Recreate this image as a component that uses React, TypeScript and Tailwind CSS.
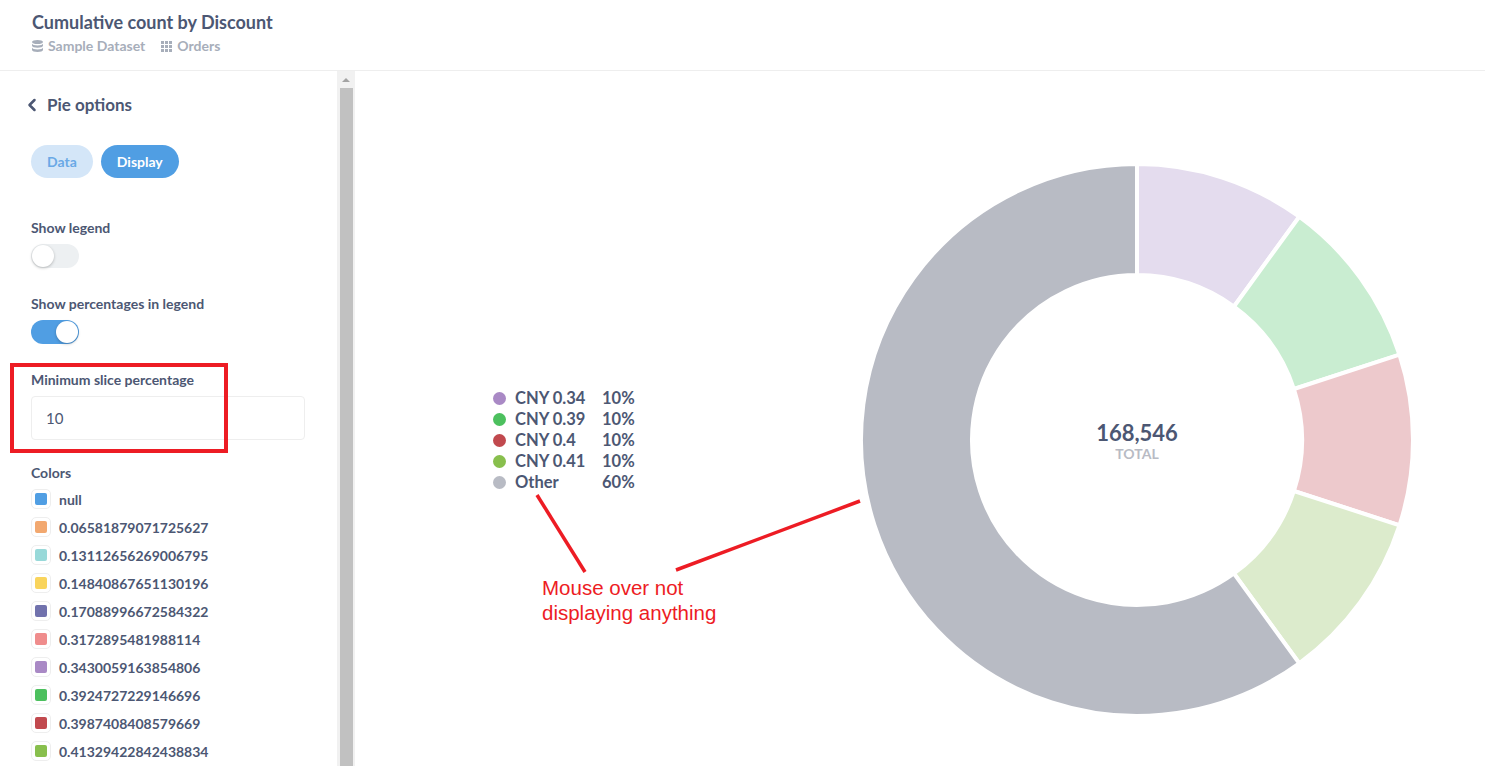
import { ChevronLeft } from "lucide-react"

const colorRows = [
  { label: "null", color: "#509ee3" },
  { label: "0.06581879071725627", color: "#f2a86f" },
  { label: "0.13112656269006795", color: "#98d9d9" },
  { label: "0.14840867651130196", color: "#f9d45c" },
  { label: "0.17088996672584322", color: "#7172ad" },
  { label: "0.3172895481988114", color: "#ef8c8c" },
  { label: "0.3430059163854806", color: "#a989c5" },
  { label: "0.3924727229146696", color: "#4cc05e" },
  { label: "0.3987408408579669", color: "#c1494e" },
  { label: "0.41329422842438834", color: "#88bf4d" },
]

const legend = [
  { label: "CNY 0.34", pct: "10%", color: "#a989c5" },
  { label: "CNY 0.39", pct: "10%", color: "#4cc05e" },
  { label: "CNY 0.4", pct: "10%", color: "#c1494e" },
  { label: "CNY 0.41", pct: "10%", color: "#88bf4d" },
  { label: "Other", pct: "60%", color: "#b8bbc4" },
]

// slices clockwise from 12 o'clock
const slices = [
  { from: 0, to: 36, fill: "#e4dcee" },
  { from: 36, to: 72, fill: "#c9edd1" },
  { from: 72, to: 108, fill: "#edc9cc" },
  { from: 108, to: 144, fill: "#dcebcc" },
  { from: 144, to: 360, fill: "#b8bbc4" },
]

function arcPath(cx: number, cy: number, r1: number, r0: number, a0: number, a1: number) {
  const p = (r: number, a: number) => {
    const rad = ((a - 90) * Math.PI) / 180
    return [cx + r * Math.cos(rad), cy + r * Math.sin(rad)]
  }
  const large = a1 - a0 > 180 ? 1 : 0
  const [x1, y1] = p(r1, a0)
  const [x2, y2] = p(r1, a1)
  const [x3, y3] = p(r0, a1)
  const [x4, y4] = p(r0, a0)
  return `M${x1},${y1} A${r1},${r1} 0 ${large} 1 ${x2},${y2} L${x3},${y3} A${r0},${r0} 0 ${large} 0 ${x4},${y4} Z`
}

function DatabaseIcon() {
  return (
    <svg width="11" height="12" viewBox="0 0 11 12" fill="#a7aeba">
      <ellipse cx="5.5" cy="2" rx="5.5" ry="2" />
      <path d="M0 3.6c0 1.1 2.5 2 5.5 2s5.5-.9 5.5-2v2.2c0 1.1-2.5 2-5.5 2S0 6.9 0 5.8z" />
      <path d="M0 7.6c0 1.1 2.5 2 5.5 2s5.5-.9 5.5-2V10c0 1.1-2.5 2-5.5 2S0 11.1 0 10z" />
    </svg>
  )
}

function GridIcon() {
  return (
    <svg width="11" height="11" viewBox="0 0 11 11" fill="#a7aeba">
      {[0, 4, 8].map((y) =>
        [0, 4, 8].map((x) => <rect key={`${x}-${y}`} x={x} y={y} width="3" height="3" />)
      )}
    </svg>
  )
}

function Toggle({ on }: { on: boolean }) {
  return (
    <div
      className={`w-[48px] h-[24px] rounded-full relative ${on ? "bg-[#509ee3]" : "bg-[#edf0f2]"}`}
    >
      <div
        className={`absolute top-[1px] w-[22px] h-[22px] rounded-full bg-white shadow-[0_1px_3px_rgba(0,0,0,0.25)] ${on ? "left-[25px]" : "left-[1px]"}`}
      />
    </div>
  )
}

export default function App() {
  return (
    <div className="w-[1485px] h-[766px] overflow-hidden bg-white text-[#4c5773] relative" style={{ fontFamily: "Lato, 'Noto Sans', sans-serif" }}>
      {/* header */}
      <div className="h-[71px] border-b border-[#eeeeee] pl-[32px] pt-[10px]">
        <h1 className="text-[18px] font-bold leading-[24px] text-[#4c5773]">Cumulative count by Discount</h1>
        <div className="flex items-center gap-[16px] mt-[3px] text-[14px] leading-[18px] font-bold text-[#a7aeba]">
          <span className="flex items-center gap-[5px]"><DatabaseIcon />Sample Dataset</span>
          <span className="flex items-center gap-[5px]"><GridIcon />Orders</span>
        </div>
      </div>

      <div className="flex h-[695px]">
        {/* sidebar */}
        <div className="w-[337px] shrink-0 pl-[31px] pr-[32px] pt-[23px]">
          <div className="flex items-center -ml-[9px] gap-[5px]">
            <ChevronLeft size={20} strokeWidth={3} className="text-[#4c5773]" />
            <span className="text-[17px] font-bold leading-[22px]">Pie options</span>
          </div>

          <div className="flex gap-[8px] mt-[29px]">
            <button className="h-[33px] px-[16px] rounded-full bg-[#d4e6f8] text-[#6aa9e6] text-[14px] font-bold">Data</button>
            <button className="h-[33px] px-[16px] rounded-full bg-[#509ee3] text-white text-[14px] font-bold">Display</button>
          </div>

          <div className="mt-[42px] text-[14px] font-bold leading-[16px]">Show legend</div>
          <div className="mt-[8px]"><Toggle on={false} /></div>

          <div className="mt-[28px] text-[14px] font-bold leading-[16px]">Show percentages in legend</div>
          <div className="mt-[8px]"><Toggle on={true} /></div>

          <div className="mt-[28px] text-[14px] font-bold leading-[16px]">Minimum slice percentage</div>
          <div className="mt-[8px] h-[44px] w-[274px] border border-[#eeeeee] rounded-[4px] flex items-center pl-[14px] text-[15px] text-[#4c5773]">10</div>

          <div className="mt-[25px] text-[14px] font-bold leading-[16px]">Colors</div>
          <div className="mt-[4px] flex flex-col">
            {colorRows.map((r) => (
              <div key={r.label} className="h-[28px] flex items-center gap-[8px]">
                <div className="w-[20px] h-[20px] rounded-[5px] border border-[#eeeeee] flex items-center justify-center">
                  <div className="w-[12px] h-[12px] rounded-[2px]" style={{ backgroundColor: r.color }} />
                </div>
                <span className="text-[14px] font-bold">{r.label}</span>
              </div>
            ))}
          </div>
        </div>

        {/* scrollbar */}
        <div className="w-[18px] shrink-0 bg-[#f1f1f1] flex flex-col items-center">
          <div className="mt-[7px] w-0 h-0 border-l-[4px] border-r-[4px] border-b-[4px] border-l-transparent border-r-transparent border-b-[#a3a3a3]" />
          <div className="mt-[6px] w-[13px] flex-1 bg-[#c1c1c1]" />
        </div>

        {/* chart */}
        <div className="flex-1 pl-[138px] pt-[89px]">
          <div className="flex items-center h-[560px]">
            <div className="w-[364px] flex flex-col">
              {legend.map((l) => (
                <div key={l.label} className="flex items-center h-[21px] text-[16.5px] font-bold">
                  <span className="w-[13px] h-[13px] rounded-full mr-[9px]" style={{ backgroundColor: l.color }} />
                  <span className="w-[87px]">{l.label}</span>
                  <span>{l.pct}</span>
                </div>
              ))}
            </div>
            <div className="relative w-[560px] h-[560px]">
              <svg width="560" height="560" viewBox="0 0 560 560">
                {slices.map((s) => (
                  <path key={s.from} d={arcPath(280, 280, 276, 165, s.from, s.to)} fill={s.fill} stroke="#ffffff" strokeWidth="4" />
                ))}
              </svg>
              <div className="absolute inset-0 flex flex-col items-center justify-center">
                <div className="text-[22px] font-bold leading-[26px] mt-[2px]">168,546</div>
                <div className="text-[14px] font-bold text-[#b8bbc4] leading-[16px]">TOTAL</div>
              </div>
            </div>
          </div>
        </div>
      </div>

      {/* annotations */}
      <div className="absolute left-[10px] top-[363px] w-[218px] h-[90px] border-[4px] border-[#ed1c24]" />
      <svg className="absolute left-0 top-0 pointer-events-none" width="1485" height="766">
        <line x1="537" y1="495" x2="585" y2="572" stroke="#ed1c24" strokeWidth="3.5" />
        <line x1="676" y1="570" x2="860" y2="501" stroke="#ed1c24" strokeWidth="3.5" />
      </svg>
      <div className="absolute left-[542px] top-[575px] text-[20.5px] leading-[25px] text-[#ed1c24]" style={{ fontFamily: "'Liberation Sans', Arial, sans-serif" }}>
        <div>Mouse over not</div>
        <div>displaying anything</div>
      </div>
    </div>
  )
}
